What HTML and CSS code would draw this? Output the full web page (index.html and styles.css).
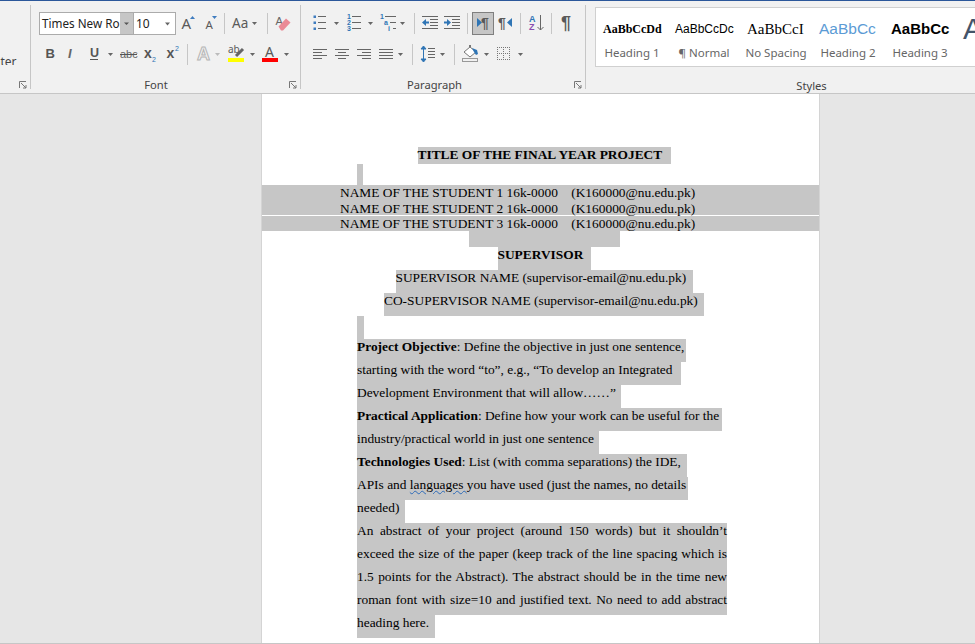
FILE: index.html
```html
<!DOCTYPE html>
<html lang="en">
<head>
<meta charset="utf-8">
<title>Word document</title>
<link rel="stylesheet" href="styles.css">
</head>
<body>
<header class="ribbon">
  <section class="group group-clip">
    <div class="clip-row"><span class="clip-text">nter</span></div>
    <footer class="group-foot"><span></span><span></span>
      <svg class="launcher" width="8" height="8" viewBox="0 0 8 8"><path d="M.5 7V.5H7M2 2l5 5M4 7h3V4" fill="none" stroke="#777"/></svg></footer>
  </section>

  <section class="group group-font">
    <div class="row row-top">
      <div class="fontbox">Times New Ro</div>
      <div class="fontdrop"><svg width="11" height="6" viewBox="0 0 11 6"><path d="M3 1.500h5L5.500 4z" fill="#555"/></svg></div>
      <div class="sizebox"><span>10</span><svg width="7" height="4" viewBox="0 0 7 4"><path d="M1 .5h5L3.500 3.500z" fill="#666"/></svg></div>
      <svg width="23" height="23" viewBox="176 12 23 23"><text class="ic" x="181.500" y="29" font-size="15">A</text><path d="M190 19h5l-2.500-3z" fill="#3f7cbf"/></svg>
      <svg width="25" height="23" viewBox="199 12 25 23"><text class="ic" x="205.500" y="29" font-size="11.500">A</text><path d="M212 16h5l-2.500 3z" fill="#3f7cbf"/></svg>
      <i class="sep"></i>
      <svg width="42" height="23" viewBox="225 12 42 23"><text class="ic" x="232" y="27.500" font-size="13.500">Aa</text><path d="M252 22h5l-2.500 3z" fill="#666"/></svg>
      <i class="sep"></i>
      <svg width="25" height="23" viewBox="268 12 25 23"><text class="ic ic-thin" x="275.500" y="25" font-size="11">A</text><path d="M278.500 26.500l7.500-8 4.500 4-7.500 8h-2z" fill="#ea8a96"/></svg>
    </div>
    <div class="row row-bottom">
      <svg width="23" height="22" viewBox="39 43 23 22"><text class="ic ic-b" x="45.500" y="58" font-size="13">B</text></svg>
      <svg width="22" height="22" viewBox="62 43 22 22"><text class="ic ic-i" x="68" y="58" font-size="13">I</text></svg>
      <svg width="32" height="22" viewBox="84 43 32 22"><text class="ic ic-b" x="90" y="57" font-size="12.500">U</text><path d="M90 59.500h8" stroke="#555"/><path d="M108 53h5l-2.500 3z" fill="#666"/></svg>
      <svg width="24" height="22" viewBox="116 43 24 22"><text class="ic ic-thin" x="120" y="58" font-size="11">abc</text><path d="M120 54.500h17" stroke="#555"/></svg>
      <svg width="22" height="22" viewBox="140 43 22 22"><text class="ic ic-b" x="144" y="58" font-size="14">x</text><text class="ic-blue" x="152" y="62" font-size="7">2</text></svg>
      <svg width="25" height="22" viewBox="162 43 25 22"><text class="ic ic-b" x="166.500" y="58" font-size="14">x</text><text class="ic-blue" x="175" y="51" font-size="7">2</text></svg>
      <i class="sep"></i>
      <svg width="37" height="22" viewBox="188 43 37 22"><text class="ic-ghost" x="197" y="60" font-size="18">A</text><path d="M215 53h5l-2.500 3z" fill="#bbb"/></svg>
      <svg width="33" height="22" viewBox="225 43 33 22"><text class="ic" x="228" y="53" font-size="10">ab</text><path d="M236 56l7-7" stroke="#666" stroke-width="3"/><rect x="228" y="58" width="16" height="4" fill="#ff0"/><path d="M250 53h5l-2.500 3z" fill="#666"/></svg>
      <svg width="34" height="22" viewBox="258 43 34 22"><text class="ic" x="265" y="57" font-size="14">A</text><rect x="262" y="58" width="16" height="4" fill="#f00"/><path d="M284 53h5l-2.500 3z" fill="#666"/></svg>
    </div>
    <footer class="group-foot"><span></span><span class="group-name name-font">Font</span>
      <svg class="launcher" width="8" height="8" viewBox="0 0 8 8"><path d="M.5 7V.5H7M2 2l5 5M4 7h3V4" fill="none" stroke="#777"/></svg></footer>
  </section>

  <section class="group group-para">
    <div class="row row-top">
      <svg width="41" height="23" viewBox="301 12 41 23"><path d="M318 16.500h8M318 22.500h8M318 28.500h8" stroke="#666"/><path d="M313.500 15.500h2.500v2.500h-2.500zM313.500 21.500h2.500v2.500h-2.500zM313.500 27.500h2.500v2.500h-2.500z" fill="#3f7cbf"/><path d="M334 22h5l-2.500 3z" fill="#666"/></svg>
      <svg width="34" height="23" viewBox="342 12 34 23"><path d="M352 16.500h9M352 22.500h9M352 28.500h9" stroke="#666"/><text class="ic-num" x="347" y="19" font-size="7">1</text><text class="ic-num" x="347" y="25" font-size="7">2</text><text class="ic-num" x="347" y="31" font-size="7">3</text><path d="M368 22h5l-2.500 3z" fill="#666"/></svg>
      <svg width="38" height="23" viewBox="376 12 38 23"><path d="M385 16.500h11M390 22.500h6M393 28.500h3" stroke="#666"/><text class="ic-num" x="380" y="19" font-size="7">1</text><text class="ic-num" x="384" y="25" font-size="7">a</text><text class="ic-num" x="388" y="31" font-size="7">i</text><path d="M400 22h5l-2.500 3z" fill="#666"/></svg>
      <i class="sep"></i>
      <svg width="26" height="23" viewBox="415 12 26 23"><path d="M422 16.500h16M430 19.500h8M430 22.500h8M430 25.500h8M422 28.500h16" stroke="#666"/><path d="M422 22.500l4-3.500v2.500h3v2h-3v2.500z" fill="#2f75b5"/></svg>
      <svg width="26" height="23" viewBox="441 12 26 23"><path d="M444 16.500h16M452 19.500h8M452 22.500h8M452 25.500h8M444 28.500h16" stroke="#666"/><path d="M451 22.500l-4-3.500v2.500h-3v2h3v2.500z" fill="#2f75b5"/></svg>
      <i class="sep sep-gap"></i>
      <div class="pressed"><svg width="20" height="21" viewBox="473 13 20 21"><path d="M477 18l5 4.500-5 4.500z" fill="#2f75b5"/><text class="ic-pil" x="481" y="28" font-size="14">¶</text></svg></div>
      <svg width="26" height="23" viewBox="494 12 26 23"><text class="ic-pil" x="498" y="28" font-size="14">¶</text><path d="M512 18l-5 4.500 5 4.500z" fill="#2f75b5"/></svg>
      <i class="sep"></i>
      <svg width="30" height="23" viewBox="521 12 30 23"><text class="ic-sort-a" x="529" y="22" font-size="9">A</text><text class="ic-sort-z" x="529" y="30" font-size="9">Z</text><path d="M540.500 15v15M537.500 27l3 3 3-3" fill="none" stroke="#666"/></svg>
      <i class="sep"></i>
      <svg width="33" height="23" viewBox="552 12 33 23"><text class="ic-pil" x="561" y="29" font-size="18">¶</text></svg>
    </div>
    <div class="row row-bottom">
      <svg width="30" height="22" viewBox="301 43 30 22"><path d="M313 49.500h14M313 52.500h9M313 55.500h14M313 58.500h9" stroke="#666"/></svg>
      <svg width="22" height="22" viewBox="331 43 22 22"><path d="M335 49.500h14M338 52.500h8M335 55.500h14M338 58.500h8" stroke="#666"/></svg>
      <svg width="22" height="22" viewBox="353 43 22 22"><path d="M357 49.500h14M362 52.500h9M357 55.500h14M362 58.500h9" stroke="#666"/></svg>
      <svg width="37" height="22" viewBox="375 43 37 22"><path d="M379 49.500h14M379 52.500h14M379 55.500h14M379 58.500h14" stroke="#666"/><path d="M398 53h5l-2.500 3z" fill="#666"/></svg>
      <i class="sep"></i>
      <svg width="41" height="22" viewBox="413 43 41 22"><path d="M423.500 47v14M421 49l2.500-3 2.500 3zM421 59l2.500 3 2.500-3z" stroke="#2f75b5" fill="#2f75b5"/><path d="M428 48.500h7M428 51.500h7M428 54.500h7M428 57.500h7" stroke="#666"/><path d="M440 53h5l-2.500 3z" fill="#666"/></svg>
      <i class="sep"></i>
      <svg width="37" height="22" viewBox="455 43 37 22"><path d="M464 52l6-5 6 5-6 5z" fill="#fff" stroke="#777"/><path d="M470 47v-2" stroke="#777" stroke-width="2"/><path d="M472 48l5 2 1 4-2 1-2-3z" fill="#2f75b5"/><rect x="462.500" y="58.500" width="15" height="3" fill="#f1f1f1" stroke="#999"/><path d="M484 53h5l-2.500 3z" fill="#666"/></svg>
      <svg width="38" height="22" viewBox="492 43 38 22"><path d="M497 47.500h13M497 53.500h13M497 59.500h13M497.500 47v13M503.500 47v13M509.500 47v13" stroke="#777" stroke-dasharray="1 1" fill="none"/><path d="M518 53h5l-2.500 3z" fill="#666"/></svg>
    </div>
    <footer class="group-foot"><span></span><span class="group-name name-para">Paragraph</span>
      <svg class="launcher" width="8" height="8" viewBox="0 0 8 8"><path d="M.5 7V.5H7M2 2l5 5M4 7h3V4" fill="none" stroke="#777"/></svg></footer>
  </section>

  <section class="group group-styles">
    <div class="gallery">
      <div class="style-item"><div class="sample s-h1">AaBbCcDd</div><div class="style-name">Heading 1</div></div>
      <div class="style-item"><div class="sample s-normal">AaBbCcDc</div><div class="style-name">¶ Normal</div></div>
      <div class="style-item"><div class="sample s-nospace">AaBbCcI</div><div class="style-name">No Spacing</div></div>
      <div class="style-item"><div class="sample s-h2">AaBbCc</div><div class="style-name">Heading 2</div></div>
      <div class="style-item"><div class="sample s-h3">AaBbCc</div><div class="style-name">Heading 3</div></div>
      <div class="style-item"><div class="sample s-title">A</div></div>
    </div>
    <footer class="group-foot group-foot-styles"><span class="group-name">Styles</span></footer>
  </section>
</header>

<main class="doc">
  <article class="page">
    <div class="cline title"><span class="sel w-title"><b>TITLE OF THE FINAL YEAR PROJECT</b></span></div>
    <div class="mark mark-1"></div>
    <div class="student">NAME OF THE STUDENT 1 16k-0000    (K160000@nu.edu.pk)</div>
    <div class="student student-mid">NAME OF THE STUDENT 2 16k-0000    (K160000@nu.edu.pk)</div>
    <div class="student student-last">NAME OF THE STUDENT 3 16k-0000    (K160000@nu.edu.pk)</div>
    <div class="cline blank"><span class="sel w-blank"></span></div>
    <div class="cline sup"><span class="sel w-sup"><b>SUPERVISOR</b></span></div>
    <div class="cline sup"><span class="sel w-name">SUPERVISOR NAME (supervisor-email@nu.edu.pk)</span></div>
    <div class="cline sup"><span class="sel w-co">CO-SUPERVISOR NAME (supervisor-email@nu.edu.pk)</span></div>
    <div class="body">
      <div class="mark mark-2"></div>
      <p class="sel w-a1"><b>Project Objective</b>: Define the objective in just one sentence,</p>
      <p class="sel w-a2">starting with the word “to”, e.g., “To develop an Integrated</p>
      <p class="sel w-a3">Development Environment that will allow……”</p>
      <p class="sel w-b1"><b>Practical Application</b>: Define how your work can be useful for the</p>
      <p class="sel w-b2">industry/practical world in just one sentence</p>
      <p class="sel w-c1"><b>Technologies Used</b>: List (with comma separations) the IDE,</p>
      <p class="sel w-c2">APIs and <span class="squiggle">languages </span>you have used (just the names, no details</p>
      <p class="sel w-c3">needed)</p>
      <p class="sel just">An abstract of your project (around 150 words) but it shouldn’t</p>
      <p class="sel just">exceed the size of the paper (keep track of the line spacing which is</p>
      <p class="sel just">1.5 points for the Abstract). The abstract should be in the time new</p>
      <p class="sel just">roman font with size=10 and justified text. No need to add abstract</p>
      <p class="sel w-d">heading here.</p>
    </div>
  </article>
</main>
<div class="statusline"></div>
</body>
</html>
```

FILE: styles.css
```css
* { box-sizing: border-box; }
html, body { margin: 0; padding: 0; }
body {
  width: 975px;
  height: 644px;
  overflow: hidden;
  background: #e6e6e6;
  font-family: "Liberation Serif", serif;
  color: #000;
}
svg { display: block; flex: none; }

/* Ribbon */
.ribbon {
  display: flex;
  height: 94px;
  padding-top: 4px;
  background: #f1f1f1;
  border-top: 1px solid #2b579a;
  border-bottom: 1px solid #c6c6c6;
  font-family: "Noto Sans", sans-serif;
  color: #444;
  overflow: hidden;
}
.group {
  display: flex;
  flex-direction: column;
  height: 84px;
  border-right: 1px solid #c6c6c6;
  flex: none;
}
.group > * { flex: none; }
.group-clip { width: 31px; }
.group-font { width: 270px; }
.group-para { width: 285px; }
.group-styles { width: 389px; border-right: 0; padding-left: 9px; }

.clip-row { height: 60px; padding-top: 49px; overflow: hidden; }
.clip-text { font-size: 12px; line-height: 16px; display: block; margin-left: -7px; }

.group-foot {
  display: grid;
  grid-template-columns: 1fr auto 1fr;
  align-items: center;
  height: 14px;
  margin-top: 13px;
  padding-right: 3px;
}
.group-clip .group-foot { margin-top: 13px; }
.group-foot-styles {
  display: flex;
  justify-content: center;
  margin-top: 12px;
  padding-right: 0;
  padding-left: 53px;
}
.group-name { font-size: 11.200px; line-height: 14px; }
.name-font { margin-right: 16px; }
.name-para { margin-right: 14px; }
.launcher { justify-self: end; }

.row { display: flex; align-items: center; }
.row-top { height: 23px; margin-top: 7px; }
.row-bottom { height: 22px; margin-top: 8px; }
.group-font .row-top { padding-left: 8px; }
.group-font .row-bottom { padding-left: 8px; }

.sep { display: block; width: 1px; height: 21px; background: #c6c6c6; flex: none; }
.sep-gap { margin-right: 4px; }

.fontbox {
  width: 81px;
  height: 23px;
  background: #fff;
  border: 1px solid #ababab;
  border-right: 0;
  padding-left: 2px;
  font-size: 11.700px;
  line-height: 21px;
  color: #222;
  white-space: nowrap;
  overflow: hidden;
}
.fontdrop {
  width: 13px;
  height: 23px;
  background: #c6c6c6;
  border-top: 1px solid #ababab;
  border-bottom: 1px solid #ababab;
  display: flex;
  align-items: center;
  justify-content: center;
}
.sizebox {
  width: 43px;
  height: 23px;
  background: #fff;
  border: 1px solid #ababab;
  display: flex;
  align-items: center;
  justify-content: space-between;
  padding: 0 4px 0 2px;
  font-size: 12px;
  color: #222;
}
.pressed {
  width: 22px;
  height: 23px;
  background: #c6c6c6;
  border: 1px solid #7f7f7f;
}

/* SVG icon text */
.ic { fill: #5a5a5a; font-family: "Noto Sans", sans-serif; }
.ic-thin { fill: #666; font-family: "Liberation Sans", sans-serif; }
.ic-b { fill: #555; font-family: "Liberation Sans", sans-serif; font-weight: 700; }
.ic-i { fill: #666; font-family: "Liberation Sans", sans-serif; font-weight: 700; font-style: italic; }
.ic-blue { fill: #2f75b5; font-family: "Liberation Sans", sans-serif; }
.ic-ghost { fill: #f1f1f1; stroke: #b5b5b5; font-family: "Liberation Sans", sans-serif; font-weight: 700; }
.ic-num { fill: #2f75b5; font-family: "Liberation Sans", sans-serif; font-weight: 700; }
.ic-pil { fill: #595959; font-family: "Liberation Sans", sans-serif; font-weight: 700; }
.ic-sort-a { fill: #2f75b5; font-family: "Liberation Sans", sans-serif; font-weight: 700; }
.ic-sort-z { fill: #8a4fb0; font-family: "Liberation Sans", sans-serif; font-weight: 700; }

/* Styles gallery */
.gallery {
  display: flex;
  height: 60px;
  margin-top: 2px;
  background: #fff;
  border: 1px solid #d0d0d0;
  border-right: 0;
  overflow: hidden;
}
.style-item { width: 72px; flex: none; padding-top: 10px; }
.sample {
  width: 66px;
  height: 22px;
  line-height: 22px;
  padding-left: 7px;
  white-space: nowrap;
  overflow: hidden;
  color: #000;
}
.s-h1 { font: 700 12px/22px "Liberation Serif", serif; }
.s-normal { font: 12px/22px "Liberation Sans", sans-serif; }
.s-nospace { font: 15px/22px "Liberation Serif", serif; }
.s-h2 { font: 15.500px/22px "Liberation Sans", sans-serif; color: #5b9bd5; }
.s-h3 { font: 700 15px/22px "Liberation Sans", sans-serif; }
.s-title { font: 30px/22px "Liberation Sans", sans-serif; color: #44546a; overflow: visible; }
.style-name {
  margin-top: 5px;
  font-size: 11.500px;
  line-height: 16px;
  color: #666;
  text-align: center;
  white-space: nowrap;
}

/* Document */
.doc { height: 549px; overflow: hidden; }
.page {
  width: 559px;
  height: 549px;
  margin-left: 261px;
  padding-top: 53px;
  background: #fff;
  border-left: 1px solid #d4d4d4;
  border-right: 1px solid #d4d4d4;
  font-size: 13.400px;
}
.statusline { height: 1px; background: #c6c6c6; }
.sel { display: block; background: #c6c6c6; }
.cline { display: flex; justify-content: center; padding-left: 7px; }
.title { height: 17px; line-height: 15px; }
.blank { height: 16px; }
.sup { height: 23px; line-height: 16px; }
.w-title { width: 253px; }
.w-blank { width: 151px; }
.w-sup { width: 93px; }
.w-name { width: 297px; }
.w-co { width: 320px; }
.mark { background: #c6c6c6; margin-left: 95px; }
.mark-1 { width: 6px; height: 21px; }
.student {
  height: 15px;
  line-height: 15px;
  padding-left: 78px;
  background: #c6c6c6;
  white-space: pre;
}
.student-mid { line-height: 17px; }
.student-last { margin-top: 1px; }
.mark-2 { width: 7px; height: 23px; margin-left: 0; }
.body { padding-left: 95px; }
.body p { margin: 0; height: 23px; line-height: 16px; white-space: nowrap; }
.w-a1 { width: 329px; }
.w-a2 { width: 324px; }
.w-a3 { width: 264px; }
.w-b1 { width: 365px; }
.w-b2 { width: 242px; }
.w-c1 { width: 330px; }
.w-c2 { width: 331px; }
.w-c3 { width: 48px; }
.w-d { width: 78px; }
.body .just {
  width: 370px;
  white-space: normal;
  text-align: justify;
  text-align-last: justify;
}
.squiggle { text-decoration: underline wavy #2e6bb8 1px; }
```
